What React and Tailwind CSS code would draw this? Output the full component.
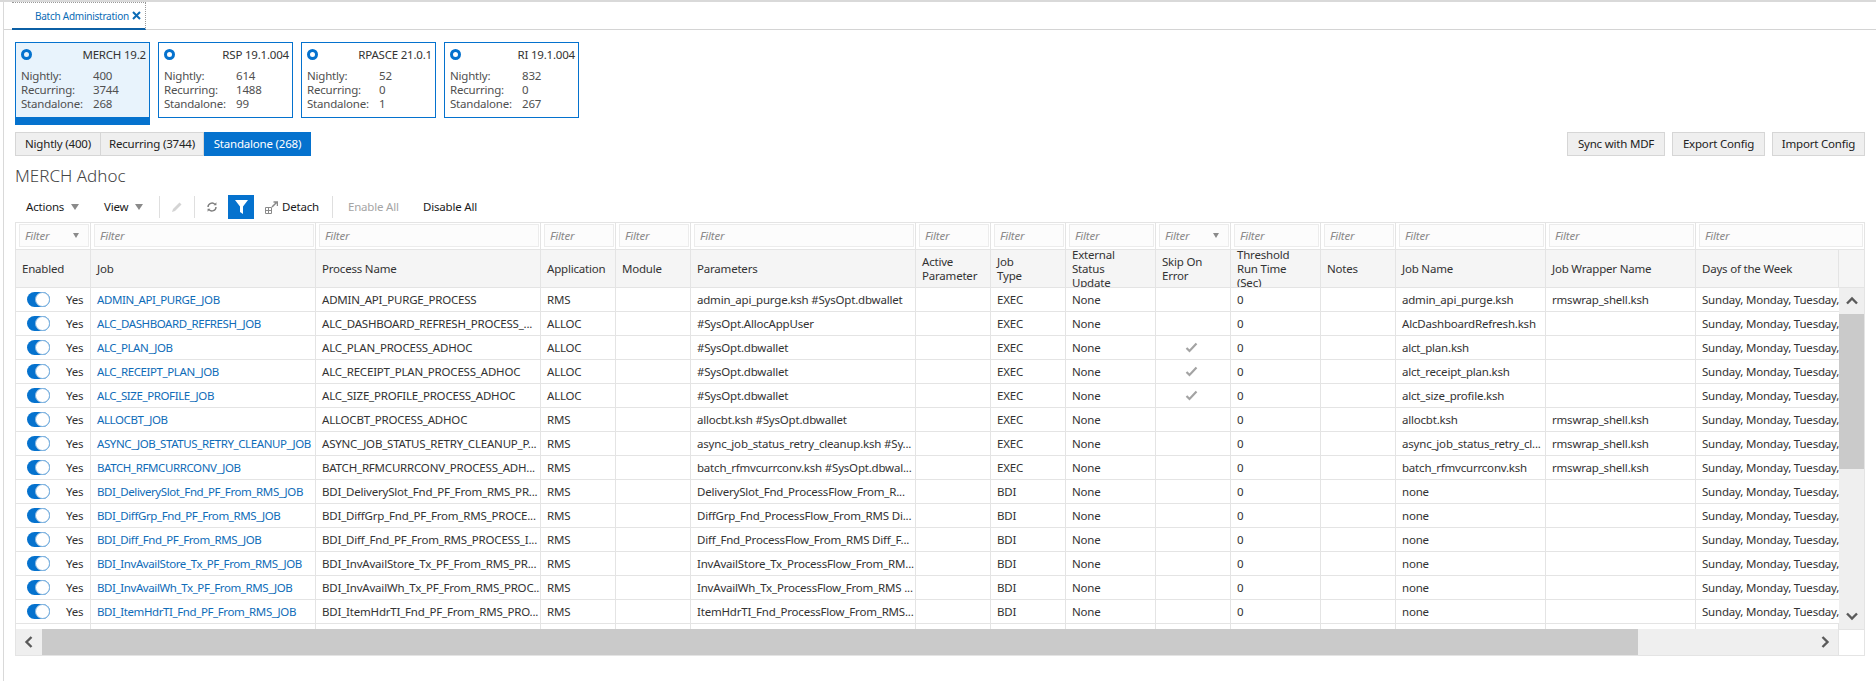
const columns = [
  { w: "w-[75px]", label: ["Enabled"], filter: true, select: true },
  { w: "w-[225px]", label: ["Job"] },
  { w: "w-[225px]", label: ["Process Name"] },
  { w: "w-[75px]", label: ["Application"] },
  { w: "w-[75px]", label: ["Module"] },
  { w: "w-[225px]", label: ["Parameters"] },
  { w: "w-[75px]", label: ["Active", "Parameter"] },
  { w: "w-[75px]", label: ["Job", "Type"] },
  { w: "w-[90px]", label: ["External", "Status", "Update"] },
  { w: "w-[75px]", label: ["Skip On", "Error"], select: true },
  { w: "w-[90px]", label: ["Threshold", "Run Time", "(Sec)"] },
  { w: "w-[75px]", label: ["Notes"] },
  { w: "w-[150px]", label: ["Job Name"] },
  { w: "w-[150px]", label: ["Job Wrapper Name"] },
  { w: "w-[143px]", label: ["Days of the Week"] },
];

const rows = [
  ["ADMIN_API_PURGE_JOB", "ADMIN_API_PURGE_PROCESS", "RMS", "admin_api_purge.ksh #SysOpt.dbwallet", "EXEC", false, "admin_api_purge.ksh", "rmswrap_shell.ksh"],
  ["ALC_DASHBOARD_REFRESH_JOB", "ALC_DASHBOARD_REFRESH_PROCESS_...", "ALLOC", "#SysOpt.AllocAppUser", "EXEC", false, "AlcDashboardRefresh.ksh", ""],
  ["ALC_PLAN_JOB", "ALC_PLAN_PROCESS_ADHOC", "ALLOC", "#SysOpt.dbwallet", "EXEC", true, "alct_plan.ksh", ""],
  ["ALC_RECEIPT_PLAN_JOB", "ALC_RECEIPT_PLAN_PROCESS_ADHOC", "ALLOC", "#SysOpt.dbwallet", "EXEC", true, "alct_receipt_plan.ksh", ""],
  ["ALC_SIZE_PROFILE_JOB", "ALC_SIZE_PROFILE_PROCESS_ADHOC", "ALLOC", "#SysOpt.dbwallet", "EXEC", true, "alct_size_profile.ksh", ""],
  ["ALLOCBT_JOB", "ALLOCBT_PROCESS_ADHOC", "RMS", "allocbt.ksh #SysOpt.dbwallet", "EXEC", false, "allocbt.ksh", "rmswrap_shell.ksh"],
  ["ASYNC_JOB_STATUS_RETRY_CLEANUP_JOB", "ASYNC_JOB_STATUS_RETRY_CLEANUP_P...", "RMS", "async_job_status_retry_cleanup.ksh #Sy...", "EXEC", false, "async_job_status_retry_cl...", "rmswrap_shell.ksh"],
  ["BATCH_RFMCURRCONV_JOB", "BATCH_RFMCURRCONV_PROCESS_ADH...", "RMS", "batch_rfmvcurrconv.ksh #SysOpt.dbwal...", "EXEC", false, "batch_rfmvcurrconv.ksh", "rmswrap_shell.ksh"],
  ["BDI_DeliverySlot_Fnd_PF_From_RMS_JOB", "BDI_DeliverySlot_Fnd_PF_From_RMS_PR...", "RMS", "DeliverySlot_Fnd_ProcessFlow_From_R...", "BDI", false, "none", ""],
  ["BDI_DiffGrp_Fnd_PF_From_RMS_JOB", "BDI_DiffGrp_Fnd_PF_From_RMS_PROCE...", "RMS", "DiffGrp_Fnd_ProcessFlow_From_RMS Di...", "BDI", false, "none", ""],
  ["BDI_Diff_Fnd_PF_From_RMS_JOB", "BDI_Diff_Fnd_PF_From_RMS_PROCESS_I...", "RMS", "Diff_Fnd_ProcessFlow_From_RMS Diff_F...", "BDI", false, "none", ""],
  ["BDI_InvAvailStore_Tx_PF_From_RMS_JOB", "BDI_InvAvailStore_Tx_PF_From_RMS_PR...", "RMS", "InvAvailStore_Tx_ProcessFlow_From_RM...", "BDI", false, "none", ""],
  ["BDI_InvAvailWh_Tx_PF_From_RMS_JOB", "BDI_InvAvailWh_Tx_PF_From_RMS_PROC...", "RMS", "InvAvailWh_Tx_ProcessFlow_From_RMS ...", "BDI", false, "none", ""],
  ["BDI_ItemHdrTI_Fnd_PF_From_RMS_JOB", "BDI_ItemHdrTI_Fnd_PF_From_RMS_PRO...", "RMS", "ItemHdrTI_Fnd_ProcessFlow_From_RMS...", "BDI", false, "none", ""],
];

const cards = [
  { name: "MERCH 19.2", n: "400", r: "3744", s: "268", active: true },
  { name: "RSP 19.1.004", n: "614", r: "1488", s: "99" },
  { name: "RPASCE 21.0.1", n: "52", r: "0", s: "1" },
  { name: "RI 19.1.004", n: "832", r: "0", s: "267" },
];

function Card({ name, n, r, s, active }) {
  return (
    <div className="w-[135px]">
      <div className={"h-[76px] border border-[#0572ce] pl-[5px] pr-[3px] pt-[3px] text-[#505050] " + (active ? "bg-[#e8f3fc]" : "bg-white")}>
        <div className="flex h-[17px] items-center justify-between">
          <span className="h-[11px] w-[11px] rounded-full border-[3px] border-[#0572ce]" />
          <span className="text-[#333]">{name}</span>
        </div>
        <div className="mt-[6px] leading-[14px]">
          {[["Nightly:", n], ["Recurring:", r], ["Standalone:", s]].map(([a, b]) => (
            <div key={a} className="flex h-[14px]">
              <span className="w-[72px]">{a}</span>
              <span>{b}</span>
            </div>
          ))}
        </div>
      </div>
      {active && <div className="h-[7px] bg-[#0572ce]" />}
    </div>
  );
}

function Caret({ className = "" }) {
  return <span className={"h-0 w-0 border-x-[4px] border-t-[6px] border-x-transparent border-t-[#8a8a8a] " + className} />;
}

function Sep({ className = "" }) {
  return <span className={"block h-[22px] w-px shrink-0 bg-[#dfdfdf] " + className} />;
}

function Toolbar() {
  return (
    <div className="mt-[7px] flex h-[24px] items-center text-[#1a1a1a]">
      <span className="ml-[11px] w-[45px]">Actions</span>
      <Caret />
      <span className="ml-[25px] w-[31px]">View</span>
      <Caret />
      <Sep className="ml-[16px]" />
      <svg className="ml-[11px]" width="12" height="12" viewBox="0 0 12 12">
        <path d="M1 11l1-3 6.5-6.5 2 2L4 10z" fill="#d4d4d4" />
      </svg>
      <Sep className="ml-[11px]" />
      <svg className="ml-[11px]" width="12" height="12" viewBox="0 0 12 12" fill="none" stroke="#7d7d7d" strokeWidth="1.4">
        <path d="M2 6a4 4 0 0 1 7-2.6M10 6a4 4 0 0 1-7 2.6" />
        <path d="M10.4 1.2v3H7.6M1.6 10.8v-3h2.8" fill="#7d7d7d" stroke="none" />
      </svg>
      <span className="ml-[10px] flex h-[24px] w-[26px] items-center justify-center bg-[#0572ce]">
        <svg width="13" height="14" viewBox="0 0 13 14"><path d="M0 0h13L8 6.5V14L5 12V6.5z" fill="#fff" /></svg>
      </span>
      <svg className="ml-[11px]" width="13" height="13" viewBox="0 0 13 13" fill="none" stroke="#8a8a8a">
        <path d="M.5 6.5h6v6h-6zM.5 9.5h6M3.5 6.5v6" />
        <path d="M7 6l4.5-4.5M8.5 1h4v4" strokeWidth="1.5" />
      </svg>
      <span className="ml-[4px] w-[45px]">Detach</span>
      <Sep className="ml-[5px]" />
      <span className="ml-[15px] w-[50px] text-[#a5a5a5]">Enable All</span>
      <span className="ml-[25px]">Disable All</span>
    </div>
  );
}

function Toggle() {
  return (
    <span className="relative block h-[15px] w-[23px] rounded-full bg-[#0572ce]">
      <span className="absolute right-0 top-0 h-[15px] w-[15px] rounded-full border border-[#8ab8e0] bg-white" />
    </span>
  );
}

function Check() {
  return (
    <svg width="13" height="11" viewBox="0 0 13 11" fill="none" stroke="#a3a3a3" strokeWidth="2.2">
      <path d="M1.5 6l3 3L11.5 1.5" />
    </svg>
  );
}

function Cell({ w, children, className = "pl-[6px]" }) {
  return (
    <div className={w + " flex shrink-0 items-center overflow-hidden border-r border-[#e4e4e4] " + className}>
      {children}
    </div>
  );
}

function Row({ data }) {
  const [job, proc, app, params, type, skip, jobName, wrapper] = data;
  return (
    <div className="flex h-[24px] border-b border-[#e4e4e4] text-[#333]">
      <Cell w={columns[0].w}>
        <span className="ml-[5px]"><Toggle /></span>
        <span className="ml-[16px]">Yes</span>
      </Cell>
      <Cell w={columns[1].w}><span className="tracking-[-0.4px] text-[#0f6cb8]">{job}</span></Cell>
      <Cell w={columns[2].w}>{proc}</Cell>
      <Cell w={columns[3].w}>{app}</Cell>
      <Cell w={columns[4].w} />
      <Cell w={columns[5].w}>{params}</Cell>
      <Cell w={columns[6].w} />
      <Cell w={columns[7].w}>{type}</Cell>
      <Cell w={columns[8].w}>None</Cell>
      <Cell w={columns[9].w} className="justify-center pr-[3px]">{skip && <Check />}</Cell>
      <Cell w={columns[10].w}>0</Cell>
      <Cell w={columns[11].w} />
      <Cell w={columns[12].w}>{jobName}</Cell>
      <Cell w={columns[13].w}>{wrapper}</Cell>
      <Cell w={columns[14].w} className="border-r-0 pl-[6px]">Sunday, Monday, Tuesday,</Cell>
    </div>
  );
}

function Chevron({ d }) {
  return (
    <svg width="12" height="12" viewBox="0 0 12 12" fill="none" stroke="#5a5a5a" strokeWidth="2.4">
      <path d={d} />
    </svg>
  );
}

function Table() {
  return (
    <div className="mt-[3px] border border-[#e4e4e4]">
      <div className="flex h-[27px] border-b border-[#e4e4e4] bg-white">
        {columns.map((c, i) => (
          <div key={i} className={(i === 14 ? "flex-1" : c.w + " shrink-0 border-r border-[#e4e4e4]") + " pl-[3px] pr-[1px] pt-[1px]"}>
            <div className="flex h-[23px] items-center justify-between border border-[#ececec] bg-[#fcfcfc] pl-[5px] pr-[9px] italic text-[#8a8a8a]">
              <span>Filter</span>
              {c.select && <span className="h-0 w-0 border-x-[3.5px] border-t-[5px] border-x-transparent border-t-[#8a8a8a]" />}
            </div>
          </div>
        ))}
      </div>
      <div className="flex h-[38px] border-b border-[#e4e4e4] bg-[#f5f5f5] leading-[14px] text-[#333]">
        {columns.map((c, i) => (
          <div key={i} className={c.w + " flex shrink-0 items-center overflow-hidden border-r border-[#e4e4e4] pl-[6px]"}>
            <div>
              {c.label.map((l) => <div key={l}>{l}</div>)}
            </div>
          </div>
        ))}
      </div>
      <div className="flex h-[341px]">
        <div className="w-[1823px] overflow-hidden">
          {rows.map((r) => <Row key={r[0]} data={r} />)}
          <div className="flex h-[24px]">
            {columns.map((c, i) => <div key={i} className={c.w + " shrink-0 border-r border-[#e4e4e4]"} />)}
          </div>
        </div>
        <div className="flex w-[25px] flex-col bg-[#efefef]">
          <div className="flex h-[26px] items-center justify-center"><Chevron d="M1 8.5l5-5 5 5" /></div>
          <div className="h-[155px] bg-[#cacaca]" />
          <div className="flex-1" />
          <div className="flex h-[26px] items-center justify-center"><Chevron d="M1 3.5l5 5 5-5" /></div>
        </div>
      </div>
      <div className="flex h-[26px] bg-[#efefef]">
        <div className="flex w-[26px] items-center justify-center"><Chevron d="M8.5 1l-5 5 5 5" /></div>
        <div className="w-[1596px] bg-[#cacaca]" />
        <div className="flex flex-1 items-center justify-end pr-[7px]"><Chevron d="M3.5 1l5 5-5 5" /></div>
        <div className="w-[26px] border-l border-t border-[#e4e4e4] bg-white" />
      </div>
    </div>
  );
}

function SegButton({ children, active, className = "" }) {
  return (
    <span className={"flex h-[24px] items-center justify-center border " + (active ? "border-[#0572ce] bg-[#0572ce] text-white " : "border-[#d6d6d6] bg-[#efefef] text-[#222] ") + className}>
      {children}
    </span>
  );
}

export default function App() {
  return (
    <div className="h-[681px] w-[1876px] overflow-hidden whitespace-nowrap bg-white text-[11.5px] leading-[14px] tracking-[-0.2px]" style={{ fontFamily: '"Noto Sans", "Open Sans", sans-serif' }}>
      <div className="h-[2px] bg-[#d9d9d9]" />
      <div className="ml-[3px] h-[679px] border-l border-[#d9d9d9]">
        <div className="h-[28px] border-b border-[#d4d4d4] pl-[8px]">
          <div className="flex h-[28px] w-[134px] items-center border-b-[2px] border-r border-t border-b-[#0b5fa5] border-r-[#999] border-t-[#999] pl-[23px] text-[#0b6bb5] [border-right-style:dotted] [border-top-style:dotted]">
            <span className="w-[92px] text-[10px] tracking-[-0.25px]">Batch Administration</span>
            <svg className="ml-[5px]" width="9" height="9" viewBox="0 0 9 9" fill="none" stroke="#0b6bb5" strokeWidth="2"><path d="M1 1l7 7M8 1L1 8" /></svg>
          </div>
        </div>
        <div className="pl-[11px] pr-[11px]">
          <div className="mt-[12px] flex h-[82px] items-start gap-[8px]">
            {cards.map((c) => <Card key={c.name} {...c} />)}
          </div>
          <div className="mt-[8px] flex justify-between">
            <div className="flex">
              <SegButton className="w-[86px]">Nightly (400)</SegButton>
              <SegButton className="w-[103px] border-l-0">Recurring (3744)</SegButton>
              <SegButton active className="w-[107px]">Standalone (268)</SegButton>
            </div>
            <div className="flex gap-[7px]">
              <SegButton className="w-[98px]">Sync with MDF</SegButton>
              <SegButton className="w-[93px]">Export Config</SegButton>
              <SegButton className="w-[93px]">Import Config</SegButton>
            </div>
          </div>
          <div className="mt-[8px] flex h-[24px] items-center text-[17px] font-light tracking-normal text-[#444]">MERCH Adhoc</div>
          <Toolbar />
          <Table />
        </div>
      </div>
    </div>
  );
}
